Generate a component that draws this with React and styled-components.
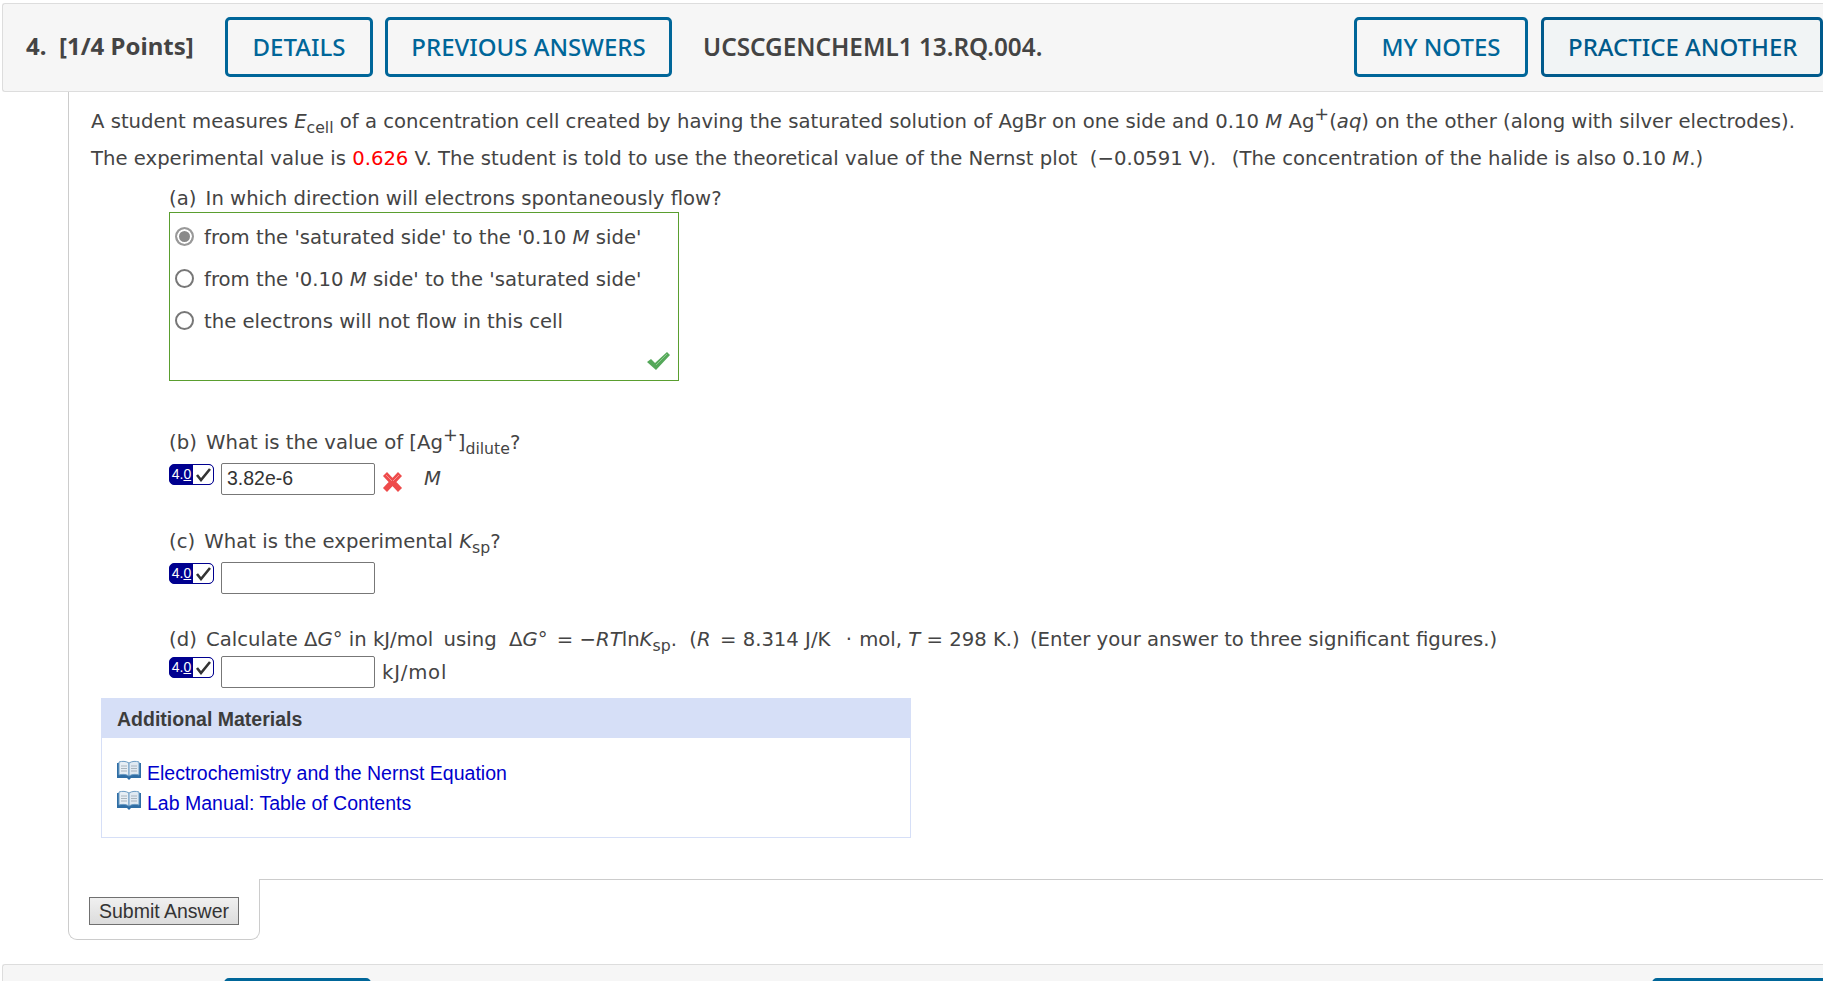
import React from 'react'
import styled, { createGlobalStyle } from 'styled-components'

const GlobalStyle = createGlobalStyle`
  html, body {
    margin: 0;
    padding: 0;
    background: #fff;
  }
`

const Page = styled.div`
  width: 1823px;
  height: 981px;
  overflow: hidden;
  padding-top: 3px;
  box-sizing: border-box;
  font-family: "DejaVu Sans", Verdana, sans-serif;
  font-size: 19.65px;
  color: #444;
`

const Header = styled.div`
  display: flex;
  align-items: center;
  height: 89px;
  margin-left: 2px;
  padding: 0 0 1px 23px;
  box-sizing: border-box;
  background: #f6f6f6;
  border: 1px solid #ddd;
  border-right: none;
  border-radius: 3px 0 0 3px;
  font-family: "Noto Sans", "Open Sans", sans-serif;
`

const Points = styled.div`
  width: 199px;
  padding-bottom: 3px;
  font-size: 24px;
  font-weight: 700;
  color: #444;
  white-space: pre;
`

const HeaderButton = styled.div`
  display: flex;
  align-items: center;
  justify-content: ${p => (p.$clipped ? 'flex-start' : 'center')};
  width: ${p => p.$w}px;
  height: 60px;
  flex: none;
  margin-right: ${p => p.$mr || 0}px;
  padding-left: ${p => (p.$clipped ? '24px' : '0')};
  padding-bottom: 1px;
  box-sizing: border-box;
  border: 3px solid ${p => (p.$clipped ? '#005a8c' : '#006699')};
  border-radius: 5px;
  background: ${p => (p.$clipped ? '#f1f4f5' : 'transparent')};
  color: ${p => (p.$clipped ? '#005a8c' : '#006699')};
  font-size: 24px;
  font-weight: 500;
  white-space: nowrap;
`

const Code = styled.div`
  flex: 1;
  margin-left: 31px;
  padding-bottom: 2px;
  font-size: 24.3px;
  font-weight: 600;
  color: #444;
`

const QuestionBody = styled.div`
  margin-left: 68px;
  padding: 11px 0 0 22px;
  height: 788px;
  box-sizing: border-box;
  border-left: 1px solid #ccc;
`

const Para = styled.div`
  height: ${p => p.$h || 37}px;
  line-height: 37px;
  white-space: pre;
`

const Part = styled.div`
  margin-left: 78px;
`

const Prompt = styled.div`
  height: ${p => p.$h}px;
  margin-top: ${p => p.$mt || 0}px;
  line-height: ${p => p.$lh}px;
  white-space: pre;
`

const PartLabel = styled.span`
  margin-right: 3px;
`

const Gap = styled.span`
  display: inline-block;
  width: ${p => p.$w}px;
`

const ChoiceBox = styled.div`
  position: relative;
  width: 510px;
  height: 169px;
  box-sizing: border-box;
  padding-top: 3px;
  border: 1px solid #5a9e2f;
`

const Choice = styled.div`
  display: flex;
  align-items: center;
  height: 42px;
  padding-left: 5px;
  white-space: pre;
`

const Radio = styled.span`
  width: 19px;
  height: 19px;
  flex: none;
  margin-right: 10px;
  margin-top: -2px;
  box-sizing: border-box;
  border-radius: 50%;
  border: 2px solid ${p => (p.$on ? '#999' : '#777')};
  background: ${p => (p.$on ? '#8a8a8a' : '#fff')};
  box-shadow: ${p => (p.$on ? 'inset 0 0 0 2px #fff' : 'none')};
`

const CornerMark = styled.svg`
  position: absolute;
  right: 8px;
  bottom: 9px;
`

const AnswerRow = styled.div`
  display: flex;
  align-items: flex-start;
  height: 32px;
`

const Badge = styled.div`
  display: flex;
  width: 45px;
  height: 21px;
  flex: none;
  margin: 1px 7px 0 0;
  box-sizing: border-box;
  border: 1px solid #00008f;
  border-radius: 5px;
  overflow: hidden;
  background: #00008f;
`

const BadgeNum = styled.span`
  width: 23px;
  flex: none;
  color: #fff;
  font-family: "Liberation Sans", Arial, sans-serif;
  font-size: 14px;
  line-height: 18px;
  text-align: center;
  u {
    text-underline-offset: 1px;
  }
`

const BadgeBox = styled.span`
  display: flex;
  align-items: center;
  justify-content: center;
  flex: 1;
  background: #fff;
  border-radius: 0 4px 4px 0;
`

const TextInput = styled.div`
  width: 154px;
  height: 32px;
  flex: none;
  box-sizing: border-box;
  padding-left: 5px;
  border: 1px solid #777;
  border-radius: 2px;
  background: #fff;
  font-family: "Liberation Sans", Arial, sans-serif;
  font-size: 19.5px;
  line-height: 28px;
  color: #333;
`

const WrongMark = styled.svg`
  flex: none;
  margin: 8px 0 0 7px;
`

const Unit = styled.span`
  margin-left: ${p => p.$ml}px;
  line-height: ${p => p.$lh}px;
  letter-spacing: ${p => p.$ls || 0}px;
`

const Materials = styled.div`
  width: 810px;
  height: 140px;
  margin: 10px 0 0 10px;
  box-sizing: border-box;
  border: 1px solid #d6dff7;
  font-family: "Liberation Sans", Arial, sans-serif;
  font-size: 19.5px;
`

const MaterialsTitle = styled.div`
  height: 39px;
  margin: 0 -1px;
  padding-left: 16px;
  line-height: 40px;
  background: #d6dff7;
  color: #3c3c3c;
  font-weight: 700;
`

const MaterialsList = styled.div`
  padding: 20px 0 0 15px;
`

const MaterialLink = styled.div`
  display: flex;
  align-items: center;
  height: 30px;
  color: #0000cc;
  svg {
    flex: none;
    margin: -5px 6px 0 0;
  }
`

const SubmitRow = styled.div`
  display: flex;
  margin-top: -1px;
`

const SubmitTab = styled.div`
  width: 192px;
  height: 61px;
  flex: none;
  margin-left: 68px;
  padding: 18px 0 0 20px;
  box-sizing: border-box;
  border: 1px solid #ccc;
  border-top: none;
  border-radius: 0 0 9px 9px;
`

const SubmitFiller = styled.div`
  flex: 1;
  border-top: 1px solid #ccc;
`

const SubmitButton = styled.div`
  width: 150px;
  height: 28px;
  box-sizing: border-box;
  border: 1px solid #707070;
  background: linear-gradient(#f0f0f0, #dcdcdc);
  font-family: "Liberation Sans", Arial, sans-serif;
  font-size: 19.5px;
  line-height: 26px;
  text-align: center;
  color: #333;
`

const NextHeader = styled.div`
  display: flex;
  height: 30px;
  margin: 24px 0 0 2px;
  padding: 13px 0 0 221px;
  box-sizing: border-box;
  background: #f6f6f6;
  border-top: 1px solid #ddd;
  border-left: 1px solid #ddd;
  border-radius: 3px 0 0 0;
`

const NextButton = styled.div`
  width: ${p => p.$w}px;
  height: 60px;
  flex: none;
  margin-right: ${p => p.$mr || 0}px;
  box-sizing: border-box;
  border: 3px solid #006699;
  border-radius: 5px;
`

const Sub = styled.sub`
  font-size: 0.8em;
  line-height: 0;
`

const Sup = styled.sup`
  font-size: 0.9em;
  line-height: 0;
  vertical-align: 0.45em;
`

const Red = styled.span`
  color: #f00;
`

const Molar = () => <i>M</i>

const Tick = () => (
  <svg width="17" height="15" viewBox="0 0 17 15">
    <path d="M2 8l4 5 9-11" fill="none" stroke="#333" strokeWidth="2.6" />
  </svg>
)

const ScoreBadge = () => (
  <Badge>
    <BadgeNum>4.<u>0</u></BadgeNum>
    <BadgeBox><Tick /></BadgeBox>
  </Badge>
)

const Book = () => (
  <svg width="24" height="21" viewBox="0 0 24 21">
    <path d="M0 3h24v15h-10l-2 2-2-2H0z" fill="#2f6ea5" />
    <path d="M2 2c3-1 7-1 10 1v13c-3-2-7-2-10-1z" fill="#e6eef5" stroke="#6c9cc4" />
    <path d="M22 2c-3-1-7-1-10 1v13c3-2 7-2 10-1z" fill="#dfe9f2" stroke="#6c9cc4" />
    <path d="M4 6h6M4 8.500h6M4 11h6M14 6h6M14 8.500h6M14 11h6" stroke="#a9b4bd" strokeWidth="1.2" />
  </svg>
)

const App = () => {
  return (
    <Page>
      <GlobalStyle />
      <Header>
        <Points>4.{'  '}[1/4 Points]</Points>
        <HeaderButton $w={148} $mr={12}>DETAILS</HeaderButton>
        <HeaderButton $w={287}>PREVIOUS ANSWERS</HeaderButton>
        <Code>UCSCGENCHEML1 13.RQ.004.</Code>
        <HeaderButton $w={174} $mr={13}>MY NOTES</HeaderButton>
        <HeaderButton $w={282} $clipped>PRACTICE ANOTHER</HeaderButton>
      </Header>

      <QuestionBody>
        <Para>A student measures <i>E</i><Sub>cell</Sub> of a concentration cell created by having the saturated solution of AgBr on one side and 0.10 <Molar /> Ag<Sup>+</Sup>(<i>aq</i>) on the other (along with silver electrodes).</Para>
        <Para $h={36}>The experimental value is <Red>0.626</Red> V. The student is told to use the theoretical value of the Nernst plot  (−0.0591 V).  <Gap $w={3} />(The concentration of the halide is also 0.10 <Molar />.)</Para>
        <Part>
          <Prompt $h={36} $lh={45}><PartLabel>(a)</PartLabel> In which direction will electrons spontaneously flow?</Prompt>
          <ChoiceBox>
            <Choice><Radio $on />from the 'saturated side' to the '0.10 <Molar /> side'</Choice>
            <Choice><Radio />from the '0.10 <Molar /> side' to the 'saturated side'</Choice>
            <Choice><Radio />the electrons will not flow in this cell</Choice>
            <CornerMark width="23" height="19" viewBox="0 0 23 19">
              <path d="M0 10l4-3 4 4L20 0l3 3L9 18z" fill="#55a85a" />
              <path d="M9 13L20 2" fill="none" stroke="#8ccb8e" strokeWidth="1" />
            </CornerMark>
          </ChoiceBox>
          <Prompt $h={38} $lh={36} $mt={44}><PartLabel>(b)</PartLabel> What is the value of [Ag<Sup>+</Sup>]<Sub>dilute</Sub>?</Prompt>
          <AnswerRow>
            <ScoreBadge />
            <TextInput>3.82e-6</TextInput>
            <WrongMark width="21" height="22" viewBox="0 0 21 22">
              <path d="M3 3l15 16M18 3L3 19" stroke="#ee4b4b" strokeWidth="5.5" />
              <path d="M4 4l6 6M17 4l-6 6" stroke="#f79090" strokeWidth="1" />
            </WrongMark>
            <Unit $ml={21} $lh={32}><Molar /></Unit>
          </AnswerRow>
          <Prompt $h={38} $lh={36} $mt={29}><PartLabel>(c)</PartLabel> What is the experimental <i>K</i><Sub>sp</Sub>?</Prompt>
          <AnswerRow>
            <ScoreBadge />
            <TextInput />
          </AnswerRow>
          <Prompt $h={38} $lh={44} $mt={24}><PartLabel>(d)</PartLabel> Calculate Δ<i>G</i>° in kJ/mol <Gap $w={4} />using  Δ<i>G</i>° <Gap $w={3} />= −<i>RT</i>ln<i>K</i><Sub>sp</Sub>.  (<i>R</i> <Gap $w={3} />= 8.314 J/K <Gap $w={9} />· <Gap $w={1} />mol, <i>T</i> = 298 K.) <Gap $w={4} />(Enter your answer to three significant figures.)</Prompt>
          <AnswerRow>
            <ScoreBadge />
            <TextInput />
            <Unit $ml={7} $lh={33} $ls={0.8}>kJ/mol</Unit>
          </AnswerRow>
        </Part>
        <Materials>
          <MaterialsTitle>Additional Materials</MaterialsTitle>
          <MaterialsList>
            <MaterialLink><Book />Electrochemistry and the Nernst Equation</MaterialLink>
            <MaterialLink><Book />Lab Manual: Table of Contents</MaterialLink>
          </MaterialsList>
        </Materials>
      </QuestionBody>

      <SubmitRow>
        <SubmitTab><SubmitButton>Submit Answer</SubmitButton></SubmitTab>
        <SubmitFiller />
      </SubmitRow>

      <NextHeader>
        <NextButton $w={147} $mr={1281} />
        <NextButton $w={200} />
      </NextHeader>
    </Page>
  )
}

export default App
